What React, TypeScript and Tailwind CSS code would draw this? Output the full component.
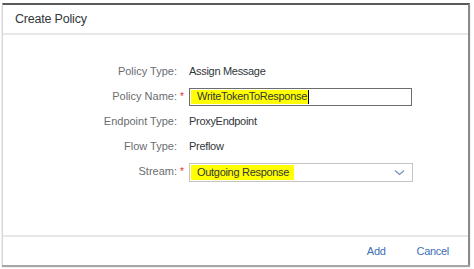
import { ReactNode } from "react";

function Row({ label, required, children }: { label: string; required?: boolean; children: ReactNode }) {
  return (
    <div className="flex h-[25px] items-center">
      <div className="w-[174px] text-right text-[#6a6d70]">{label}</div>
      <div className="w-[11px] pl-[3px] text-[10px] text-[#e0301e]">{required ? "*" : ""}</div>
      <div className="flex flex-1 items-center pl-[1px] tracking-[-0.3px]">{children}</div>
    </div>
  );
}

export default function App() {
  return (
    <div className="h-[269px] w-[474px] bg-white pl-[2px] pt-[3px] font-['Liberation_Sans',Arial,sans-serif] text-[11px]">
      <div className="flex h-[262px] w-[468px] flex-col border-t-2 border-r-2 border-l border-t-[#5a5a5a] border-r-[#8a8a8a] border-l-[#d6d6d6] bg-white shadow-[0_2px_1px_rgba(0,0,0,0.35)]">
        <div className="flex h-[30px] items-center border-b-2 border-[#e8e8e8] pl-[12px] text-[12.5px] tracking-[-0.2px] text-[#32363a]">
          Create Policy
        </div>
        <div className="flex-1 pt-[24px] text-[#32363a]">
          <Row label="Policy Type:">Assign Message</Row>
          <Row label="Policy Name:" required>
            <div className="flex h-[18px] w-[223px] items-stretch border border-[#6d6d6d] p-[1px]">
              <div className="flex items-center border-r border-black bg-[#ffff00] pl-[6px] pr-[1px]">
                WriteTokenToResponse
              </div>
            </div>
          </Row>
          <Row label="Endpoint Type:">ProxyEndpoint</Row>
          <Row label="Flow Type:">Preflow</Row>
          <Row label="Stream:" required>
            <div className="mt-[1px] flex h-[19px] w-[224px] items-stretch justify-between border border-[#c4c4c4] p-[1px]">
              <div className="flex items-center bg-[#ffff00] pl-[6px] pr-[5px]">Outgoing Response</div>
              <div className="flex items-center pr-[6px]">
                <svg width="11" height="7" viewBox="0 0 11 7" fill="none">
                  <path d="M1 1.5 L5.5 5.5 L10 1.5" stroke="#6f8fb3" strokeWidth="1.1" />
                </svg>
              </div>
            </div>
          </Row>
        </div>
        <div className="flex h-[30px] items-center justify-end gap-[31px] border-t-2 border-[#e8e8e8] pr-[19px] tracking-[-0.3px] text-[#3d70b5]">
          <span>Add</span>
          <span>Cancel</span>
        </div>
      </div>
    </div>
  );
}
